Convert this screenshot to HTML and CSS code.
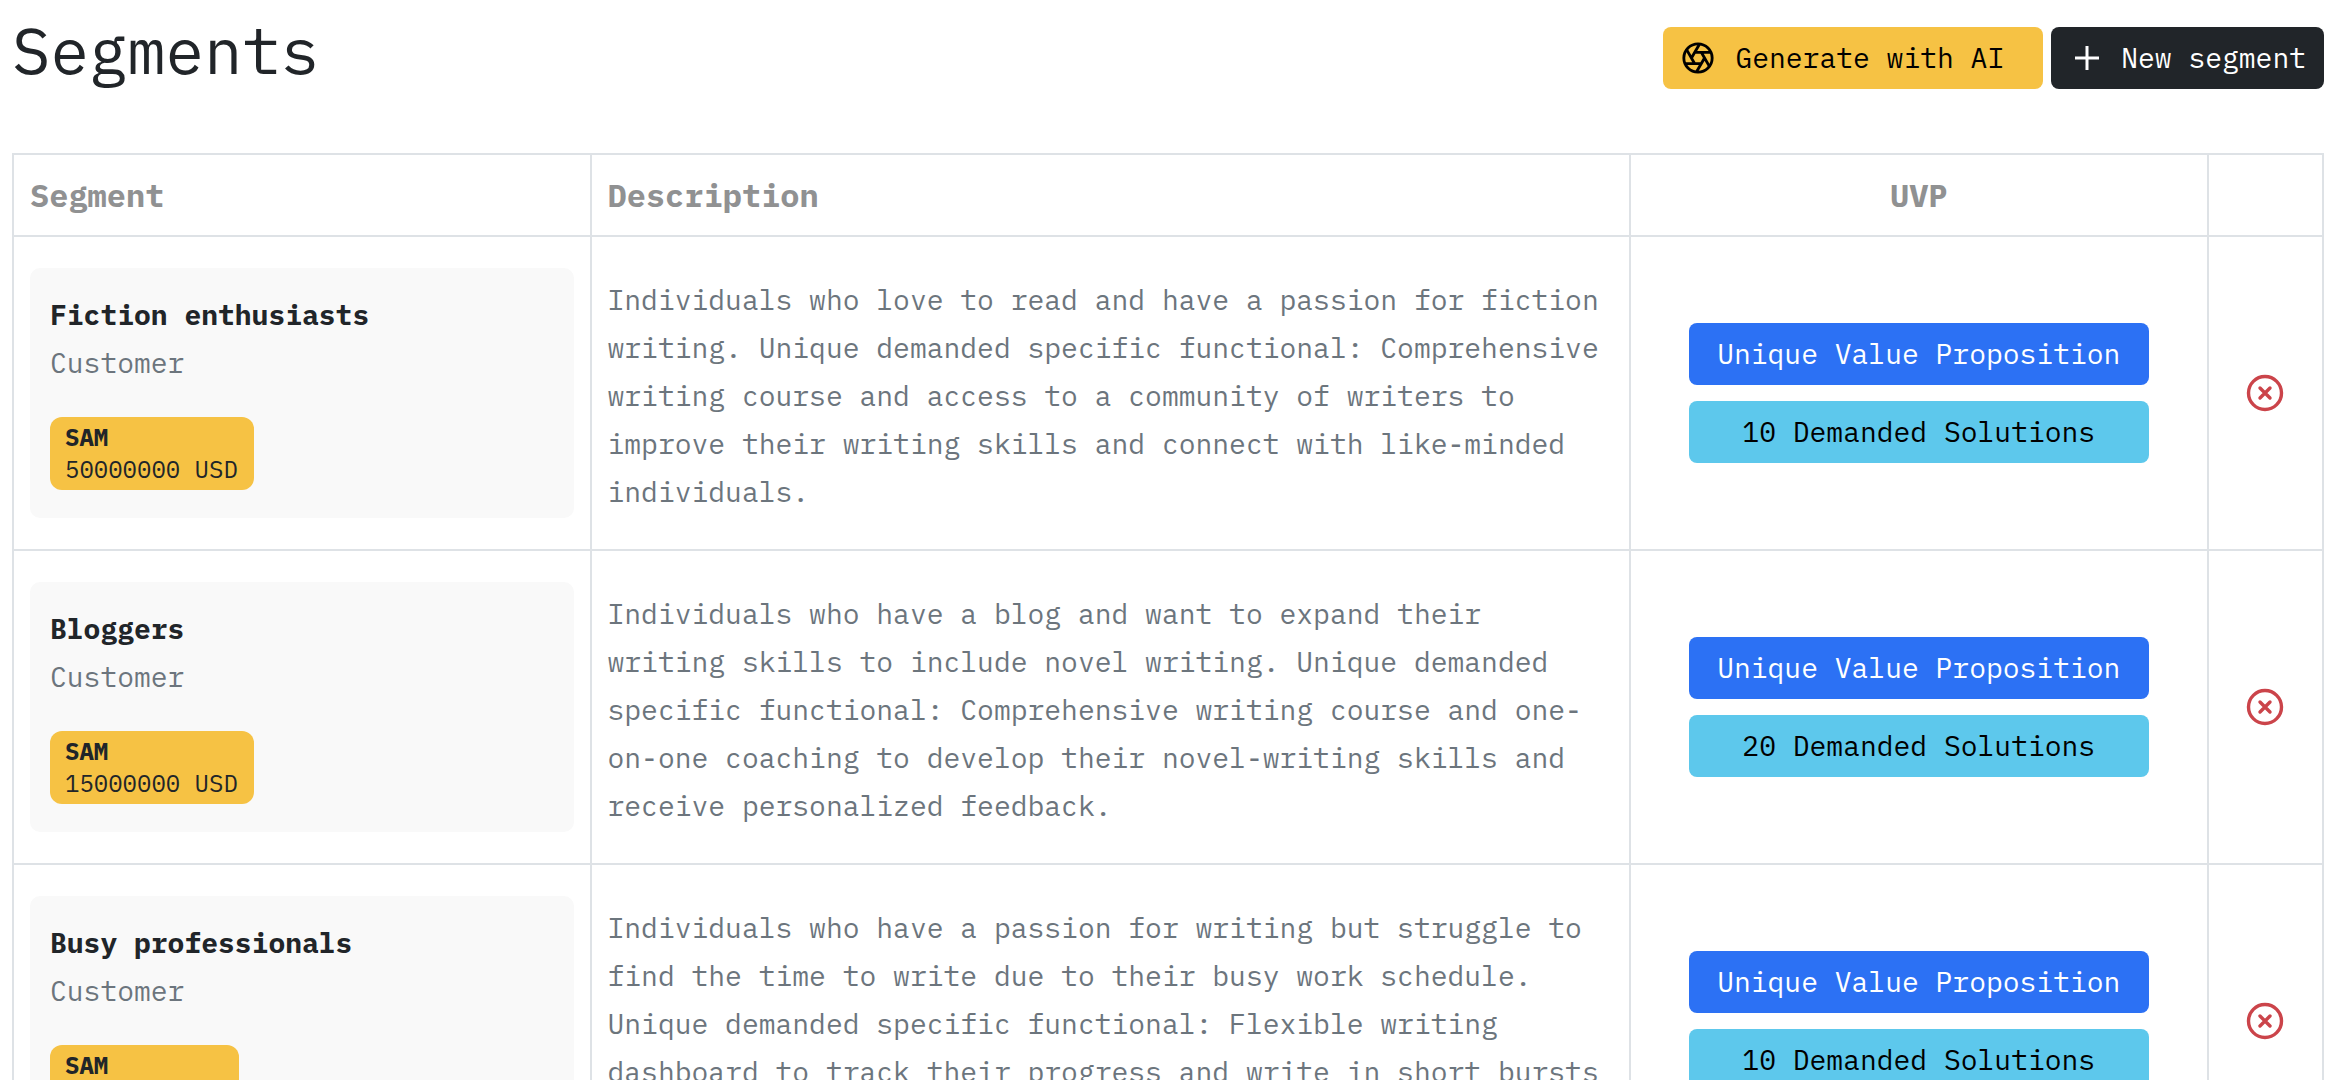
FILE: index.html
```html
<!DOCTYPE html>
<html lang="en">
<head>
    <meta charset="UTF-8">
    <meta name="viewport" content="width=device-width, initial-scale=1.0">
    <title>Segments</title>
    <link rel="stylesheet" href="styles.css">
</head>
<body>
    <header class="page-header">
        <h1>Segments</h1>
        <div class="actions">
            <button type="button" class="btn btn-warning">
                <svg class="icon-aperture" viewBox="0 0 24 24" aria-hidden="true">
                    <circle cx="12" cy="12" r="10"/>
                    <path d="M14.31 8l5.74 9.94M9.69 8h11.48M7.38 12l5.74-9.94M9.69 16L3.95 6.06M14.31 16H2.83M16.62 12l-5.74 9.94"/>
                </svg>
                <span>Generate with AI</span>
            </button>
            <button type="button" class="btn btn-dark">
                <svg class="icon-plus" viewBox="0 0 36 36" aria-hidden="true">
                    <path d="M18 6v24M6 18h24"/>
                </svg>
                <span>New segment</span>
            </button>
        </div>
    </header>

    <table class="segments">
        <colgroup>
            <col class="col-segment">
            <col class="col-description">
            <col class="col-uvp">
            <col class="col-remove">
        </colgroup>
        <thead>
            <tr>
                <th>Segment</th>
                <th>Description</th>
                <th class="center">UVP</th>
                <th></th>
            </tr>
        </thead>
        <tbody>
            <tr>
                <td>
                    <div class="segment-card">
                        <div class="segment-name">Fiction enthusiasts</div>
                        <div class="segment-type">Customer</div>
                        <div class="badge"><strong>SAM</strong>50000000 USD</div>
                    </div>
                </td>
                <td class="description">Individuals who love to read and have a passion for fiction writing. Unique demanded specific functional: Comprehensive writing course and access to a community of writers to improve their writing skills and connect with like-minded individuals.</td>
                <td>
                    <div class="uvp-buttons">
                        <button type="button" class="btn btn-primary">Unique Value Proposition</button>
                        <button type="button" class="btn btn-info">10 Demanded Solutions</button>
                    </div>
                </td>
                <td>
                    <button type="button" class="remove-btn" aria-label="Remove segment">
                        <svg viewBox="0 0 38 38" aria-hidden="true"><circle cx="19" cy="19" r="16.5"/><path d="M14 14l10 10M24 14L14 24"/></svg>
                    </button>
                </td>
            </tr>
            <tr>
                <td>
                    <div class="segment-card">
                        <div class="segment-name">Bloggers</div>
                        <div class="segment-type">Customer</div>
                        <div class="badge"><strong>SAM</strong>15000000 USD</div>
                    </div>
                </td>
                <td class="description">Individuals who have a blog and want to expand their writing skills to include novel writing. Unique demanded specific functional: Comprehensive writing course and one-on-one coaching to develop their novel-writing skills and receive personalized feedback.</td>
                <td>
                    <div class="uvp-buttons">
                        <button type="button" class="btn btn-primary">Unique Value Proposition</button>
                        <button type="button" class="btn btn-info">20 Demanded Solutions</button>
                    </div>
                </td>
                <td>
                    <button type="button" class="remove-btn" aria-label="Remove segment">
                        <svg viewBox="0 0 38 38" aria-hidden="true"><circle cx="19" cy="19" r="16.5"/><path d="M14 14l10 10M24 14L14 24"/></svg>
                    </button>
                </td>
            </tr>
            <tr>
                <td>
                    <div class="segment-card">
                        <div class="segment-name">Busy professionals</div>
                        <div class="segment-type">Customer</div>
                        <div class="badge"><strong>SAM</strong>5000000 USD</div>
                    </div>
                </td>
                <td class="description">Individuals who have a passion for writing but struggle to find the time to write due to their busy work schedule. Unique demanded specific functional: Flexible writing dashboard to track their progress and write in short bursts</td>
                <td>
                    <div class="uvp-buttons">
                        <button type="button" class="btn btn-primary">Unique Value Proposition</button>
                        <button type="button" class="btn btn-info">10 Demanded Solutions</button>
                    </div>
                </td>
                <td>
                    <button type="button" class="remove-btn" aria-label="Remove segment">
                        <svg viewBox="0 0 38 38" aria-hidden="true"><circle cx="19" cy="19" r="16.5"/><path d="M14 14l10 10M24 14L14 24"/></svg>
                    </button>
                </td>
            </tr>
        </tbody>
    </table>
</body>
</html>
```
FILE: styles.css
```css
* {
    box-sizing: border-box;
}

body {
    font-family: "IBM Plex Mono", "Liberation Mono", monospace;
    font-size: 28px;
    line-height: 48px;
    margin: 0;
    padding: 12px 26px 24px 12px;
    background-color: #fff;
    color: #212529;
}

/* Header */
.page-header {
    display: flex;
    justify-content: space-between;
    align-items: flex-end;
    margin-bottom: 64px;
}

h1 {
    margin: 0;
    font-size: 64px;
    font-weight: normal;
    line-height: 77px;
}

.actions {
    display: flex;
    gap: 8px;
}

/* Buttons */
.btn {
    display: flex;
    align-items: center;
    justify-content: center;
    padding: 7px 18px;
    border: none;
    border-radius: 8px;
    font: inherit;
    cursor: pointer;
}

.btn svg {
    fill: none;
    stroke: currentColor;
}

.btn-warning {
    gap: 20px;
    padding-right: 39px;
    background-color: #f6c244;
    color: #000;
}

.btn-dark {
    gap: 16px;
    background-color: #212529;
    color: #fff;
}

.btn-primary {
    background-color: #2c71f4;
    color: #fff;
}

.btn-info {
    background-color: #5dc8ec;
    color: #000;
}

.icon-aperture {
    width: 34px;
    height: 34px;
    stroke-width: 2;
}

.icon-plus {
    width: 36px;
    height: 36px;
    stroke-width: 3;
}

/* Table */
.segments {
    width: 100%;
    table-layout: fixed;
    border-collapse: collapse;
}

.col-segment, .col-uvp {
    width: 25%;
}

.col-description {
    width: 45%;
}

.col-remove {
    width: 5%;
}

.segments th, .segments td {
    border: 2px solid #dee2e6;
    text-align: left;
}

.segments th {
    padding: 16px;
    font-size: 32px;
    color: #909192;
}

.segments td {
    padding: 31px 16px;
}

.segments .center {
    text-align: center;
}

.segments .description {
    padding-top: 39px;
    padding-bottom: 24px;
    vertical-align: top;
    color: #6c757d;
}

.segment-card {
    padding: 23px 20px 28px;
    border-radius: 10px;
    background-color: #f9f9f9;
}

.segment-name {
    font-weight: bold;
}

.segment-type {
    color: #6c757d;
}

.badge {
    width: fit-content;
    margin-top: 30px;
    padding: 4px 16px 5px 15px;
    border-radius: 12px;
    background-color: #f6c244;
    font-size: 24px;
    line-height: 32px;
}

.badge strong {
    display: block;
}

.uvp-buttons {
    display: flex;
    flex-direction: column;
    gap: 16px;
    width: 460px;
    max-width: 100%;
    margin: 0 auto;
}

.remove-btn {
    display: block;
    margin: 0 auto;
    padding: 0;
    border: none;
    background: none;
    cursor: pointer;
}

.remove-btn svg {
    display: block;
    width: 38px;
    height: 38px;
    fill: none;
    stroke: #cb444a;
    stroke-width: 3.4;
    stroke-linecap: round;
}
```
